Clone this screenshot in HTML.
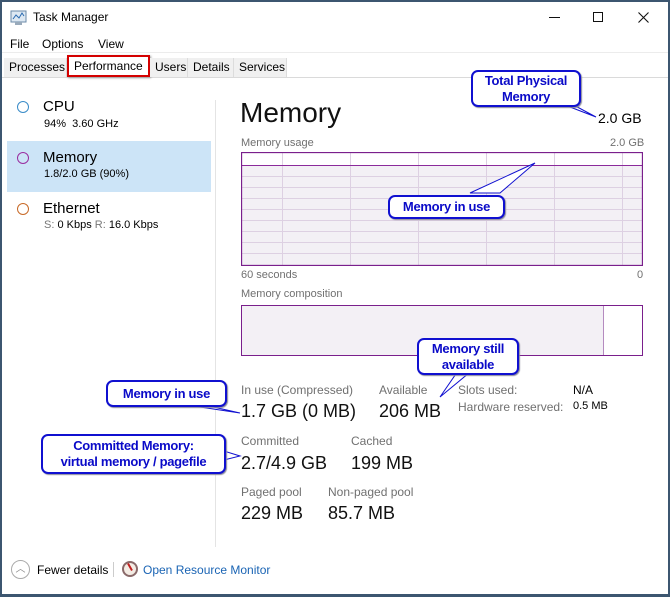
<!DOCTYPE html>
<html><head><meta charset="utf-8"><style>
*{margin:0;padding:0;box-sizing:border-box}
body{width:670px;height:597px;overflow:hidden;background:#fff;font-family:"Liberation Sans",sans-serif;position:relative;color:#000}
.a{position:absolute;white-space:nowrap}
.g{color:#707070;font-size:11px}
.big{font-size:18px;color:#111}
.tab{position:absolute;top:58px;height:19px;background:#f0f0f0;border-right:1px solid #dcdcdc;font-size:12px;padding:2px 5px 0}
.co{position:absolute;border:2px solid #1010d0;border-radius:7px;background:#fff;color:#0a0ac8;font-weight:bold;font-size:13px;text-align:center;line-height:16px;box-shadow:1px 1px 1px #889;letter-spacing:-0.3px}
</style></head><body>
<div class="a" style="left:0;top:0;width:670px;height:597px;border:2px solid #3c5670;border-bottom-width:3px;border-left-width:2px"></div>
<svg class="a" style="left:10px;top:10px" width="18" height="16"><rect x="1" y="1" width="15" height="11" fill="#dde8f2" stroke="#6a8aa8"/><polyline points="3,9 6,5 9,8 12,3 14,6" fill="none" stroke="#2a6ab0"/><rect x="5" y="12" width="7" height="3" fill="#9ab"/></svg>
<div class="a" style="left:33px;top:10px;font-size:12px">Task Manager</div>
<div class="a" style="left:549px;top:17px;width:11px;height:1px;background:#111"></div>
<div class="a" style="left:593px;top:12px;width:10px;height:10px;border:1px solid #111"></div>
<svg class="a" style="left:638px;top:12px" width="11" height="11"><path d="M0.5 0.5L10.5 10.5M10.5 0.5L0.5 10.5" stroke="#111" stroke-width="1.1"/></svg>
<div class="a" style="left:10px;top:37px;font-size:12px">File</div>
<div class="a" style="left:42px;top:37px;font-size:12px">Options</div>
<div class="a" style="left:98px;top:37px;font-size:12px">View</div>
<div class="a" style="left:2px;top:52px;width:666px;height:1px;background:#ececec"></div>
<div class="a" style="left:2px;top:77px;width:666px;height:1px;background:#dadada"></div>
<div class="tab" style="left:4px;width:63px">Processes</div>
<div class="tab" style="left:67px;width:83px;background:#fff;border:2px solid #d40000;top:55px;height:22px;box-shadow:1px 1px 2px #999">Performance</div>
<div class="tab" style="left:150px;width:38px">Users</div>
<div class="tab" style="left:188px;width:46px">Details</div>
<div class="tab" style="left:234px;width:53px">Services</div>
<div class="a" style="left:215px;top:100px;width:1px;height:447px;background:#e4e4e4"></div>
<div class="a" style="left:7px;top:141px;width:204px;height:51px;background:#cce4f7"></div>
<div class="a" style="left:17px;top:101px;width:12px;height:12px;border-radius:50%;border:1px solid #3a8cc8"></div>
<div class="a" style="left:43px;top:98px;font-size:15px">CPU</div>
<div class="a" style="left:44px;top:118px;font-size:11px">94%&nbsp; 3.60 GHz</div>
<div class="a" style="left:17px;top:152px;width:12px;height:12px;border-radius:50%;border:1px solid #9a2ea0"></div>
<div class="a" style="left:43px;top:149px;font-size:15px">Memory</div>
<div class="a" style="left:44px;top:168px;font-size:11px">1.8/2.0 GB (90%)</div>
<div class="a" style="left:17px;top:203px;width:12px;height:12px;border-radius:50%;border:1px solid #c86a28"></div>
<div class="a" style="left:43px;top:200px;font-size:15px">Ethernet</div>
<div class="a" style="left:44px;top:219px;font-size:11px"><span style="color:#777">S:</span> 0 Kbps <span style="color:#777">R:</span> 16.0 Kbps</div>
<div class="a" style="left:240px;top:97px;font-size:28px;color:#111">Memory</div>
<div class="a" style="left:598px;top:110px;font-size:14px">2.0 GB</div>
<div class="a g" style="left:241px;top:137px">Memory usage</div>
<div class="a g" style="left:610px;top:137px">2.0 GB</div>
<svg class="a" style="left:241px;top:152px" width="402" height="114">
<rect x="0" y="13" width="402" height="101" fill="#f3f0f5"/>
<g stroke="#ddd0e2" stroke-width="1">
<line x1="0" y1="24.5" x2="402" y2="24.5"/><line x1="0" y1="35.5" x2="402" y2="35.5"/><line x1="0" y1="46.5" x2="402" y2="46.5"/><line x1="0" y1="57.5" x2="402" y2="57.5"/><line x1="0" y1="68.5" x2="402" y2="68.5"/><line x1="0" y1="79.5" x2="402" y2="79.5"/><line x1="0" y1="90.5" x2="402" y2="90.5"/><line x1="0" y1="101.5" x2="402" y2="101.5"/>
<line x1="41.5" y1="0" x2="41.5" y2="114"/><line x1="109.5" y1="0" x2="109.5" y2="114"/><line x1="177.5" y1="0" x2="177.5" y2="114"/><line x1="245.5" y1="0" x2="245.5" y2="114"/><line x1="313.5" y1="0" x2="313.5" y2="114"/><line x1="381.5" y1="0" x2="381.5" y2="114"/>
</g>
<line x1="0" y1="13.5" x2="402" y2="13.5" stroke="#8b2a9b"/>
<rect x="0.5" y="0.5" width="401" height="113" fill="none" stroke="#7a1f8c" stroke-width="1.3"/>
</svg>
<div class="a g" style="left:241px;top:269px">60 seconds</div>
<div class="a g" style="left:637px;top:269px">0</div>
<div class="a g" style="left:241px;top:288px">Memory composition</div>
<div class="a" style="left:241px;top:305px;width:402px;height:51px;border:1px solid #7a1f8c;background:#f3f0f5"></div>
<div class="a" style="left:603px;top:306px;width:39px;height:49px;background:#fff;border-left:1px solid #b58bc0"></div>
<div class="a g" style="left:241px;top:383px;font-size:12px">In use (Compressed)</div>
<div class="a big" style="left:241px;top:401px">1.7 GB (0 MB)</div>
<div class="a g" style="left:379px;top:383px;font-size:12px">Available</div>
<div class="a big" style="left:379px;top:401px">206 MB</div>
<div class="a g" style="left:458px;top:383px;font-size:12px">Slots used:</div>
<div class="a" style="left:573px;top:383px;font-size:12px">N/A</div>
<div class="a g" style="left:458px;top:400px;font-size:12px">Hardware reserved:</div>
<div class="a" style="left:573px;top:400px;font-size:11px">0.5 MB</div>
<div class="a g" style="left:241px;top:434px;font-size:12px">Committed</div>
<div class="a big" style="left:241px;top:453px">2.7/4.9 GB</div>
<div class="a g" style="left:351px;top:434px;font-size:12px">Cached</div>
<div class="a big" style="left:351px;top:453px">199 MB</div>
<div class="a g" style="left:241px;top:485px;font-size:12px">Paged pool</div>
<div class="a big" style="left:241px;top:503px">229 MB</div>
<div class="a g" style="left:328px;top:485px;font-size:12px">Non-paged pool</div>
<div class="a big" style="left:328px;top:503px">85.7 MB</div>
<div class="a" style="left:11px;top:560px;width:19px;height:19px;border-radius:50%;border:1px solid #aaa;color:#888;font-size:10px;text-align:center;line-height:17px">︿</div>
<div class="a" style="left:37px;top:563px;font-size:12px">Fewer details</div>
<div class="a" style="left:113px;top:562px;width:1px;height:15px;background:#ccc"></div>
<div class="a" style="left:122px;top:561px;width:16px;height:16px;border-radius:50%;border:2px solid #8a6a6a;background:#f4ece4"></div>
<div class="a" style="left:129px;top:563px;width:2px;height:8px;background:#c02020;transform:rotate(-30deg)"></div>
<div class="a" style="left:143px;top:563px;font-size:12px;color:#1a64b4">Open Resource Monitor</div>
<svg class="a" style="left:0;top:0" width="670" height="597">
<g fill="#fff" stroke="#1010d0" stroke-width="1">
<polygon points="557,102 568,102 596,117"/>
<polygon points="470,193 500,193 535,163"/>
<polygon points="460,368 475,368 440,397"/>
<polygon points="180,404 200,404 240,413"/>
<polygon points="224,451 224,460 240,456"/>
</g></svg>
<div class="co" style="left:471px;top:70px;width:110px;height:37px;padding-top:1px">Total Physical<br>Memory</div>
<div class="co" style="left:388px;top:195px;width:117px;height:24px;line-height:20px">Memory in use</div>
<div class="co" style="left:417px;top:338px;width:102px;height:37px;padding-top:1px">Memory still<br>available</div>
<div class="co" style="left:106px;top:380px;width:121px;height:27px;line-height:23px">Memory in use</div>
<div class="co" style="left:41px;top:434px;width:185px;height:40px;padding-top:2px">Committed Memory:<br>virtual memory / pagefile</div>
</body></html>
